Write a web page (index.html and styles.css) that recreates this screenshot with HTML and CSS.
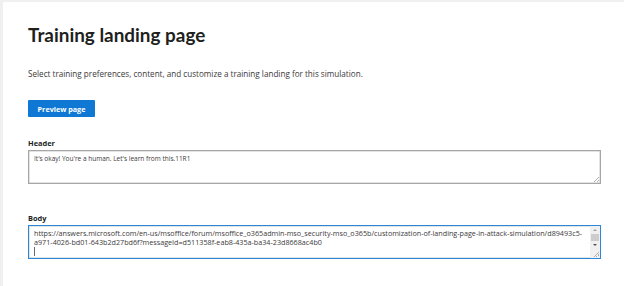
FILE: index.html
```html
<!DOCTYPE html>
<html>
<head>
<meta charset="utf-8">
<link rel="stylesheet" href="styles.css">
</head>
<body>
<div class="frame">
  <main class="panel">
    <h1 class="title">Training landing page</h1>
    <p class="desc">Select training preferences, content, and customize a training landing for this simulation.</p>
    <button class="btn-primary">Preview page</button>
    <div class="field field-header">
      <label class="label">Header</label>
      <div class="textbox">
        <div class="textbox-text">It's okay! You're a human. Let's learn from this.11R1</div>
        <span class="grip"></span>
      </div>
    </div>
    <div class="field field-body">
      <label class="label">Body</label>
      <div class="textbox textbox-focus">
        <div class="textbox-text textbox-url">https://answers.microsoft.com/en-us/msoffice/forum/msoffice_o365admin-mso_security-mso_o365b/customization-of-landing-page-in-attack-simulation/d89493c5-<br>a971-4026-bd01-643b2d27bd6f?messageId=d511358f-eab8-435a-ba34-23d8668ac4b0<br><span class="caret"></span></div>
        <div class="scrollbar">
          <span class="arrow arrow-up"></span>
          <span class="thumb"></span>
          <span class="arrow arrow-down"></span>
        </div>
        <span class="grip"></span>
      </div>
    </div>
  </main>
</div>
</body>
</html>
```
FILE: styles.css
```css
* { box-sizing: border-box; }
html, body { margin: 0; padding: 0; }
body {
  background: #f0f0f0;
  font-family: "Open Sans", "Noto Sans", sans-serif;
  color: #323130;
}
.frame {
  padding: 2px 0 0 3px;
  height: 286px;
  overflow: hidden;
}
.panel {
  background: #fff;
  height: 100%;
  padding: 20px 0 0 25px;
}
.title {
  margin: 0;
  font-family: "Lato", "Open Sans", sans-serif;
  font-size: 18.9px;
  font-weight: 700;
  line-height: 26px;
  color: #201f1e;
}
.desc {
  margin: 20px 0 0;
  font-size: 8.15px;
  line-height: 12px;
  color: #3b3a39;
}
.btn-primary {
  display: block;
  margin-top: 20px;
  width: 67px;
  height: 17px;
  border: none;
  border-radius: 1px;
  background: #0f78d4;
  color: #fff;
  font-family: inherit;
  font-size: 7.2px;
  font-weight: 700;
  padding: 0;
}
.field { width: 573px; }
.field-header { margin-top: 21px; }
.field-body { margin-top: 29px; }
.label {
  display: block;
  font-size: 7.4px;
  font-weight: 700;
  line-height: 10px;
  color: #201f1e;
  margin-bottom: 2px;
}
.textbox {
  position: relative;
  height: 34px;
  border: 1px solid #a6a6a6;
  box-shadow: inset 0 0 0 0.5px #c8c8c8;
  background: #fff;
  padding: 3px 5px;
}
.textbox-text {
  font-size: 6.5px;
  line-height: 9px;
  color: #3b3a39;
  white-space: nowrap;
  overflow: hidden;
}
.textbox-url { font-size: 7.2px; }
.textbox-focus {
  border: 1.5px solid #2b88d8;
  padding-right: 14px;
}
.caret {
  display: inline-block;
  width: 1px;
  height: 9px;
  background: #6b6b6b;
  vertical-align: top;
}
.grip {
  position: absolute;
  right: 1px;
  bottom: 1px;
  width: 5px;
  height: 5px;
  background: linear-gradient(135deg, transparent 45%, #b0b0b0 45%, #b0b0b0 55%, transparent 55%, transparent 70%, #b0b0b0 70%, #b0b0b0 80%, transparent 80%);
}
.scrollbar {
  position: absolute;
  top: 0;
  right: 0;
  width: 10px;
  height: 100%;
  background: #f0f0f0;
  display: flex;
  flex-direction: column;
  align-items: center;
}
.arrow {
  width: 0;
  height: 0;
  margin: 3px 0;
  border-left: 2px solid transparent;
  border-right: 2px solid transparent;
}
.arrow-up { border-bottom: 2px solid #a3a3a3; }
.arrow-down { border-top: 2px solid #505050; }
.thumb {
  width: 8px;
  height: 7px;
  background: #cdcdcd;
}
```
